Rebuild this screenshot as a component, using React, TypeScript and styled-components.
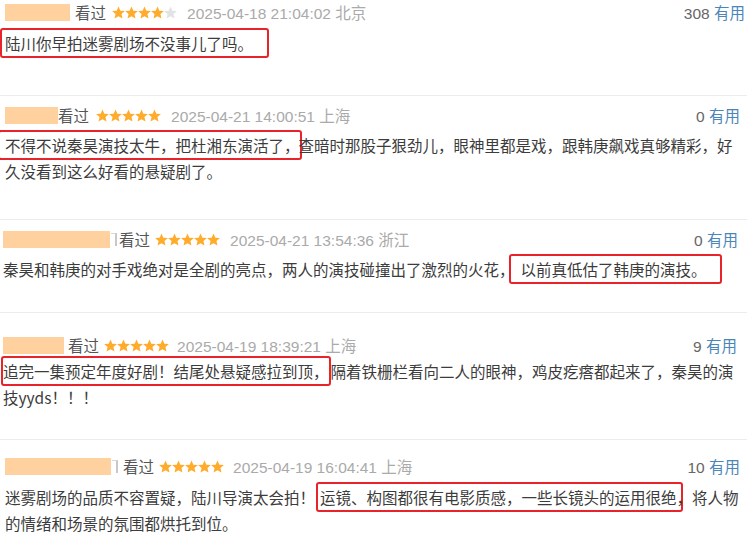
import React from "react";
import styled, { createGlobalStyle } from "styled-components";

const Global = createGlobalStyle`
  html, body { margin: 0; padding: 0; background: #fff; }
  body { font-family: "Liberation Sans", "Noto Sans CJK SC", sans-serif; }
`;

const Page = styled.div`
  width: 747px;
  height: 558px;
  overflow: hidden;
  background: #fff;
  display: flex;
  flex-direction: column;
`;

const Section = styled.section<{ $pt: number; $pb: number; $pl: number; $last?: boolean }>`
  padding: ${(p) => p.$pt}px 6px ${(p) => p.$pb}px ${(p) => p.$pl}px;
  border-bottom: ${(p) => (p.$last ? "none" : "1px solid #ececec")};
  display: flex;
  flex-direction: column;
`;

const Header = styled.div`
  display: flex;
  align-items: center;
  height: 24px;
  font-size: 15.5px;
  white-space: nowrap;
`;

const NameBlob = styled.span<{ $w: number }>`
  display: inline-block;
  width: ${(p) => p.$w}px;
  height: 17px;
  background: #ffd19e;
  flex: none;
`;

const NameTail = styled.span`
  display: inline-block;
  width: 4px;
  height: 12px;
  margin-left: 1px;
  border-right: 2px solid #c8c8c8;
  border-top: 1px solid #d8d8d8;
  flex: none;
`;

const Watched = styled.span<{ $ml: number }>`
  color: #555;
  margin-left: ${(p) => p.$ml}px;
`;

const Stars = styled.span<{ $ml: number }>`
  display: inline-flex;
  margin-left: ${(p) => p.$ml}px;
`;

const Time = styled.span<{ $ml: number }>`
  color: #aaa;
  margin-left: ${(p) => p.$ml}px;
`;

const Useful = styled.span<{ $mr: number }>`
  margin-left: auto;
  margin-right: ${(p) => p.$mr}px;
  color: #666;
`;

const UsefulLabel = styled.span`
  color: #4b86b8;
`;

const Body = styled.p<{ $mt: number }>`
  margin: ${(p) => p.$mt}px 0 0;
  font-size: 15.5px;
  line-height: 26px;
  color: #3c3c3c;
  font-family: "Noto Sans CJK SC", "Liberation Sans", sans-serif;
`;

const Mark = styled.span<{ $l: number; $r: number; $ml: number; $mr: number }>`
  border: 2px solid #e8232a;
  border-radius: 3px;
  padding: 2px ${(p) => p.$r}px 2px ${(p) => p.$l}px;
  margin: 0 ${(p) => p.$mr}px 0 ${(p) => p.$ml}px;
`;

const Star = ({ on }: { on: boolean }) => (
  <svg width="13" height="13" viewBox="1 1.2 22 21">
    <path
      d="M12 1.5l3.1 7.1 7.7.7-5.8 5.1 1.7 7.6L12 18l-6.7 4 1.7-7.6-5.8-5.1 7.7-.7z"
      fill={on ? "#ffac2d" : "#e3e3e3"}
    />
  </svg>
);

type Review = {
  pt: number;
  pb: number;
  pl: number;
  nameW: number;
  tail?: boolean;
  watchedMl: number;
  starsMl: number;
  timeMl: number;
  stars: number;
  time: string;
  useful: number;
  usefulMr: number;
  bodyMt: number;
  before: string;
  mark: string;
  after: string;
  pad: [number, number];
  mg: [number, number];
};

const reviews: Review[] = [
  {
    pt: 0, pb: 39, pl: 5, nameW: 65, watchedMl: 5, starsMl: 6, timeMl: 10, stars: 4,
    time: "2025-04-18 21:04:02 北京", useful: 308, usefulMr: -4, bodyMt: 6,
    before: "", mark: "陆川你早拍迷雾剧场不没事儿了吗。", after: "", pad: [3, 14], mg: [-5, 0],
  },
  {
    pt: 7, pb: 35, pl: 5, nameW: 53, watchedMl: 0, starsMl: 7, timeMl: 10, stars: 5,
    time: "2025-04-21 14:00:51 上海", useful: 0, usefulMr: 1, bodyMt: 5,
    before: "", mark: "不得不说秦昊演技太牛，把杜湘东演活了，", after: "查暗时那股子狠劲儿，眼神里都是戏，跟韩庚飙戏真够精彩，好久没看到这么好看的悬疑剧了。", pad: [5, 0], mg: [-7, -3],
  },
  {
    pt: 7, pb: 30, pl: 3, nameW: 107, tail: true, watchedMl: 2, starsMl: 5, timeMl: 10, stars: 5,
    time: "2025-04-21 13:54:36 浙江", useful: 0, usefulMr: 3, bodyMt: 5,
    before: "秦昊和韩庚的对手戏绝对是全剧的亮点，两人的演技碰撞出了激烈的火花，", mark: "以前真低估了韩庚的演技。", after: "", pad: [10, 13], mg: [-6, 0],
  },
  {
    pt: 20, pb: 29, pl: 3, nameW: 61, watchedMl: 4, starsMl: 5, timeMl: 8, stars: 5,
    time: "2025-04-19 18:39:21 上海", useful: 9, usefulMr: 4, bodyMt: 1,
    before: "", mark: "追完一集预定年度好剧！结尾处悬疑感拉到顶，", after: "隔着铁栅栏看向二人的眼神，鸡皮疙瘩都起来了，秦昊的演技yyds！！！", pad: [0, 0], mg: [-2, 0],
  },
  {
    pt: 14, pb: 0, pl: 5, nameW: 106, tail: true, watchedMl: 5, starsMl: 5, timeMl: 9, stars: 5,
    time: "2025-04-19 16:04:41 上海", useful: 10, usefulMr: 1, bodyMt: 6,
    before: "迷雾剧场的品质不容置疑，陆川导演太会拍！", mark: "运镜、构图都很有电影质感，一些长镜头的运用很绝", after: "，将人物的情绪和场景的氛围都烘托到位。", pad: [2, 4], mg: [1, -6],
  },
];

export default function App() {
  return (
    <Page>
      <Global />
      {reviews.map((r, i) => (
        <Section key={i} $pt={r.pt} $pb={r.pb} $pl={r.pl} $last={i === reviews.length - 1}>
          <Header>
            <NameBlob $w={r.nameW} />
            {r.tail && <NameTail />}
            <Watched $ml={r.watchedMl}>看过</Watched>
            <Stars $ml={r.starsMl}>
              {[0, 1, 2, 3, 4].map((s) => (
                <Star key={s} on={s < r.stars} />
              ))}
            </Stars>
            <Time $ml={r.timeMl}>{r.time}</Time>
            <Useful $mr={r.usefulMr}>
              {r.useful} <UsefulLabel>有用</UsefulLabel>
            </Useful>
          </Header>
          <Body $mt={r.bodyMt}>
            {r.before}
            <Mark $l={r.pad[0]} $r={r.pad[1]} $ml={r.mg[0]} $mr={r.mg[1]}>
              {r.mark}
            </Mark>
            {r.after}
          </Body>
        </Section>
      ))}
    </Page>
  );
}
